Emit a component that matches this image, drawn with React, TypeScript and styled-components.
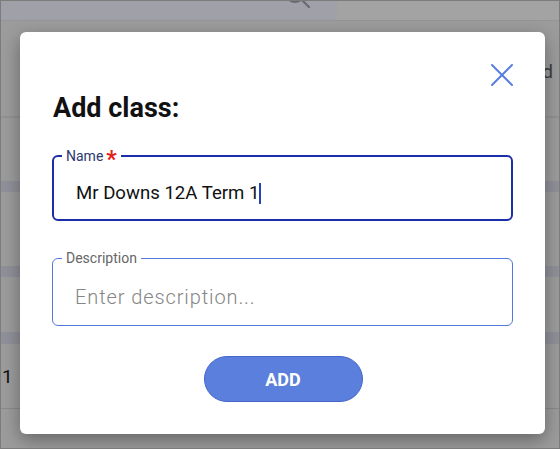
import React from "react";
import styled, { createGlobalStyle } from "styled-components";

const GlobalStyle = createGlobalStyle`
  html, body { margin: 0; padding: 0; }
  body { font-family: Roboto, "Noto Sans", "Liberation Sans", sans-serif; }
  * { box-sizing: border-box; }
`;

const Frame = styled.div`
  position: relative;
  width: 560px;
  height: 449px;
  overflow: hidden;
  border: 1px solid #7c7c7c;
  background: #9c9c9c;
`;

/* ---------- dimmed page behind the dialog ---------- */
const Page = styled.div`
  display: flex;
  flex-direction: column;
  height: 100%;
`;

const TopBar = styled.div`
  display: flex;
  height: 20px;
  flex: none;
  background: #a3a3a3;
  border-bottom: 1px solid #959595;
`;

const SearchBox = styled.div`
  width: 336px;
  background: #9fa0a8;
  display: flex;
  justify-content: flex-end;
  padding-right: 24px;
  overflow: hidden;
`;

const SearchIcon = styled.svg`
  width: 30px;
  height: 30px;
  margin-top: -20px;
  flex: none;
`;

const HeaderRow = styled.div`
  height: 97px;
  flex: none;
  display: flex;
  justify-content: flex-end;
  align-items: flex-start;
  padding: 39px 6px 0 0;
  border-bottom: 2px solid #929292;
  font-size: 19px;
  color: #3d3d3d;
`;

const TableRow = styled.div<{ $h: number }>`
  height: ${(p) => p.$h}px;
  flex: none;
  display: flex;
  align-items: center;
  padding-left: 1px;
  font-size: 19px;
  color: #111;
`;

const Band = styled.div<{ $h: number }>`
  height: ${(p) => p.$h}px;
  flex: none;
  background: #8f9099;
`;

const Rule = styled.div`
  height: 1px;
  flex: none;
  background: #8a8a8a;
`;

/* ---------- dialog ---------- */
const Overlay = styled.div`
  position: absolute;
  inset: 0;
  padding: 31px 0 0 19px;
`;

const Modal = styled.div`
  width: 525px;
  background: #fff;
  border-radius: 6px;
  box-shadow: 0 6px 18px rgba(0, 0, 0, 0.35);
  padding: 32px 32px 32px 33px;
  display: flex;
  flex-direction: column;
`;

const CloseButton = styled.button`
  align-self: flex-end;
  width: 22px;
  height: 22px;
  padding: 0;
  border: none;
  background: none;
  cursor: pointer;
  display: block;
  svg { display: block; }
`;

const Title = styled.h2`
  margin: 7px 0 0;
  font-size: 27px;
  line-height: 30px;
  font-weight: 700;
  color: #111;
`;

const Field = styled.fieldset<{ $active?: boolean }>`
  margin: ${(p) => (p.$active ? "25px" : "29px")} 0 0 -1px;
  min-width: 0;
  border: ${(p) => (p.$active ? "2px solid #1b2ea8" : "1px solid #5377dc")};
  border-radius: 6px;
  padding: ${(p) => (p.$active ? "18px 21px 15px 8px" : "20px 21px 17px 9px")};
`;

const Legend = styled.legend<{ $active?: boolean }>`
  margin-left: 0;
  padding: 0 4px;
  font-size: 14px;
  line-height: 16px;
  color: ${(p) => (p.$active ? "#2c3870" : "#666")};
`;

const Required = styled.span`
  color: #e3201c;
  font-weight: 700;
  font-size: 23px;
  margin-left: 3px;
  vertical-align: -6px;
  line-height: 0;
`;

const Value = styled.div`
  padding-left: 14px;
  font-size: 18.6px;
  line-height: 22px;
  color: #111;
  display: flex;
  align-items: center;
`;

const Caret = styled.span`
  width: 2px;
  height: 21px;
  margin-left: 0;
  background: #2543b5;
`;

const Placeholder = styled.div`
  padding-left: 13px;
  font-size: 20px;
  line-height: 22px;
  font-weight: 300;
  letter-spacing: 0.9px;
  color: #858585;
`;

const AddButton = styled.button`
  align-self: center;
  margin-top: 30px;
  width: 159px;
  height: 46px;
  border-radius: 23px;
  border: 1px solid #4465c9;
  background: #5b7fdc;
  color: #fff;
  font-family: inherit;
  font-size: 18px;
  font-weight: 700;
  cursor: pointer;
`;

export default function App() {
  return (
    <>
      <GlobalStyle />
      <Frame>
        <Page>
          <TopBar>
            <SearchBox>
              <SearchIcon viewBox="0 0 30 30" fill="none" stroke="#6a6a72" strokeWidth="2.2" strokeLinecap="round">
                <circle cx="12" cy="12" r="9" />
                <line x1="18.5" y1="18.5" x2="26" y2="26" />
              </SearchIcon>
            </SearchBox>
          </TopBar>
          <HeaderRow>Add</HeaderRow>
          <TableRow $h={63} />
          <Band $h={11} />
          <TableRow $h={74} />
          <Band $h={11} />
          <TableRow $h={55} />
          <Band $h={12} />
          <TableRow $h={64}>1</TableRow>
          <Rule />
          <TableRow $h={36} />
        </Page>

        <Overlay>
          <Modal role="dialog" aria-labelledby="add-class-title">
            <CloseButton aria-label="Close">
              <svg width="22" height="22" viewBox="0 0 22 22" fill="none" stroke="#5a7fe0" strokeWidth="2" strokeLinecap="round">
                <line x1="1" y1="1" x2="21" y2="21" />
                <line x1="21" y1="1" x2="1" y2="21" />
              </svg>
            </CloseButton>
            <Title id="add-class-title">Add class:</Title>

            <Field $active>
              <Legend $active>
                Name<Required>*</Required>
              </Legend>
              <Value>
                Mr Downs 12A Term 1<Caret />
              </Value>
            </Field>

            <Field>
              <Legend>Description</Legend>
              <Placeholder>Enter description...</Placeholder>
            </Field>

            <AddButton>ADD</AddButton>
          </Modal>
        </Overlay>
      </Frame>
    </>
  );
}
